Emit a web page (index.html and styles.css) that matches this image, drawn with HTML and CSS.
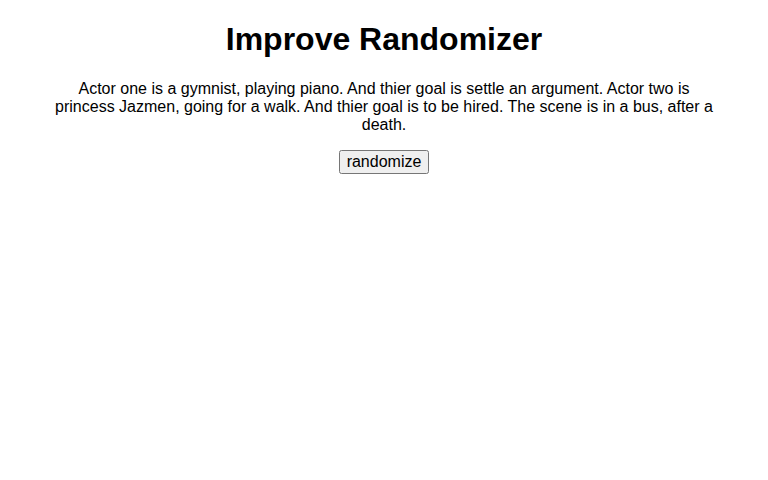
FILE: index.html
```html
<!DOCTYPE html>
<html lang="en">
<head>
    <meta charset="UTF-8">
    <title>Improve Randomizer</title>
    <link rel="stylesheet" href="styles.css">
</head>
<body>
<div class="main">
    <h1>Improve Randomizer</h1>
    <p class="scene">Actor one is a gymnist, playing piano. And thier goal is settle an argument. Actor two is princess Jazmen, going for a walk. And thier goal is to be hired. The scene is in a bus, after a death.</p>
    <button class="btn" type="button">randomize</button>
</div>
</body>
</html>
```

FILE: styles.css
```css
body{margin: 0;font-family: "Liberation Sans", Arial, sans-serif;color: #000;background: #fff;}
.main{text-align: center;}
.main h1{font-size: 32px;}
.main .scene{font-size: 16px;max-width: 666px;margin: 16px auto;}
.main .btn{font-family: "Liberation Sans", Arial, sans-serif;font-size: 16px;}
```
